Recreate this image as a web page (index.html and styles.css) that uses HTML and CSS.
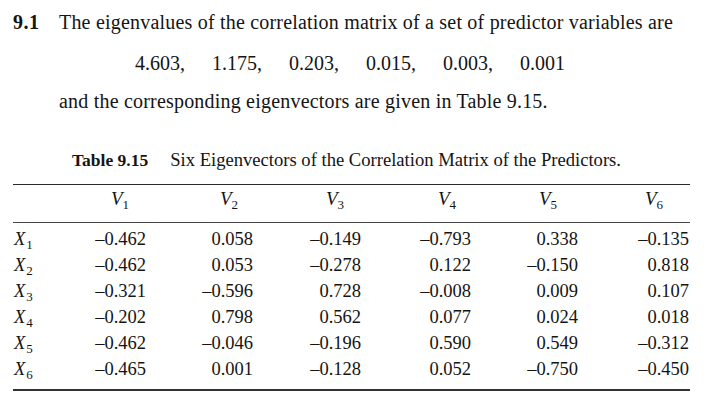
FILE: index.html
```html
<!DOCTYPE html>
<html>
<head>
<meta charset="utf-8">
<link rel="stylesheet" href="styles.css">
</head>
<body>
<div class="page">
  <div class="problem">
    <div class="line first"><span class="num">9.1</span><span>The eigenvalues of the correlation matrix of a set of predictor variables are</span></div>
    <div class="eigen">
      <span>4.603,</span><span>1.175,</span><span>0.203,</span><span>0.015,</span><span>0.003,</span><span>0.001</span>
    </div>
    <div class="line indent">and the corresponding eigenvectors are given in Table 9.15.</div>
  </div>
  <div class="caption"><span class="label">Table 9.15</span>Six Eigenvectors of the Correlation Matrix of the Predictors.</div>
  <div class="table">
    <div class="row head">
      <span></span><span class="v v1"><i>V</i><sub>1</sub></span><span class="v v2"><i>V</i><sub>2</sub></span><span class="v v3"><i>V</i><sub>3</sub></span><span class="v v4"><i>V</i><sub>4</sub></span><span class="v v5"><i>V</i><sub>5</sub></span><span class="v v6"><i>V</i><sub>6</sub></span>
    </div>
    <div class="body">
      <div class="row"><span class="x"><i>X</i><sub>1</sub></span><span>–0.462</span><span>0.058</span><span>–0.149</span><span>–0.793</span><span>0.338</span><span>–0.135</span></div>
      <div class="row"><span class="x"><i>X</i><sub>2</sub></span><span>–0.462</span><span>0.053</span><span>–0.278</span><span>0.122</span><span>–0.150</span><span>0.818</span></div>
      <div class="row"><span class="x"><i>X</i><sub>3</sub></span><span>–0.321</span><span>–0.596</span><span>0.728</span><span>–0.008</span><span>0.009</span><span>0.107</span></div>
      <div class="row"><span class="x"><i>X</i><sub>4</sub></span><span>–0.202</span><span>0.798</span><span>0.562</span><span>0.077</span><span>0.024</span><span>0.018</span></div>
      <div class="row"><span class="x"><i>X</i><sub>5</sub></span><span>–0.462</span><span>–0.046</span><span>–0.196</span><span>0.590</span><span>0.549</span><span>–0.312</span></div>
      <div class="row"><span class="x"><i>X</i><sub>6</sub></span><span>–0.465</span><span>0.001</span><span>–0.128</span><span>0.052</span><span>–0.750</span><span>–0.450</span></div>
    </div>
  </div>
</div>
</body>
</html>
```
FILE: styles.css
```css
html, body {
  margin: 0;
  padding: 0;
  background: #ffffff;
}
body {
  width: 716px;
  height: 403px;
  overflow: hidden;
  font-family: "Liberation Serif", "Times New Roman", serif;
  color: #141414;
}
.page {
  padding: 3px 0 0 13px;
  width: 677px;
}
.line {
  font-size: 20px;
  letter-spacing: 0.2px;
  line-height: 38px;
  height: 38px;
  white-space: nowrap;
}
.first {
  display: flex;
}
.num {
  font-weight: bold;
  width: 46px;
  letter-spacing: 0.5px;
}
.eigen {
  margin-top: 3px;
  padding-left: 122px;
  display: flex;
  font-size: 20px;
  line-height: 38px;
  height: 38px;
}
.eigen span {
  width: 77px;
}
.indent {
  padding-left: 46px;
}
.caption {
  margin-top: 21px;
  padding-left: 59px;
  font-size: 18.6px;
  line-height: 38px;
  height: 38px;
  white-space: nowrap;
}
.caption .label {
  font-weight: bold;
  font-size: 17.5px;
  margin-right: 22px;
}
.table {
  margin-top: 5px;
  border-top: 1.5px solid #2a2a2a;
  border-bottom: 2px solid #333333;
  width: 677px;
  font-size: 18.5px;
}
.row {
  display: grid;
  grid-template-columns: 70px 63px 107px 108px 110px 107px 111px;
  text-align: right;
  line-height: 26px;
  height: 26px;
}
.row .x {
  text-align: left;
  padding-left: 1px;
}
.head {
  height: 20px;
  line-height: 20px;
  padding: 4px 0 13px;
  border-bottom: 1px solid #444444;
}
.head i { font-size: 19px; }
.v { padding-right: 17px; }
.v2 { padding-right: 15px; }
.v4 { padding-right: 15px; }
.v5 { padding-right: 21px; }
.v6 { padding-right: 26px; }
sub {
  font-size: 13px;
  vertical-align: -4px;
  line-height: 0;
  font-style: normal;
}
.x sub { margin-left: 1px; }
.body {
  padding: 3px 0 7px;
}
```
